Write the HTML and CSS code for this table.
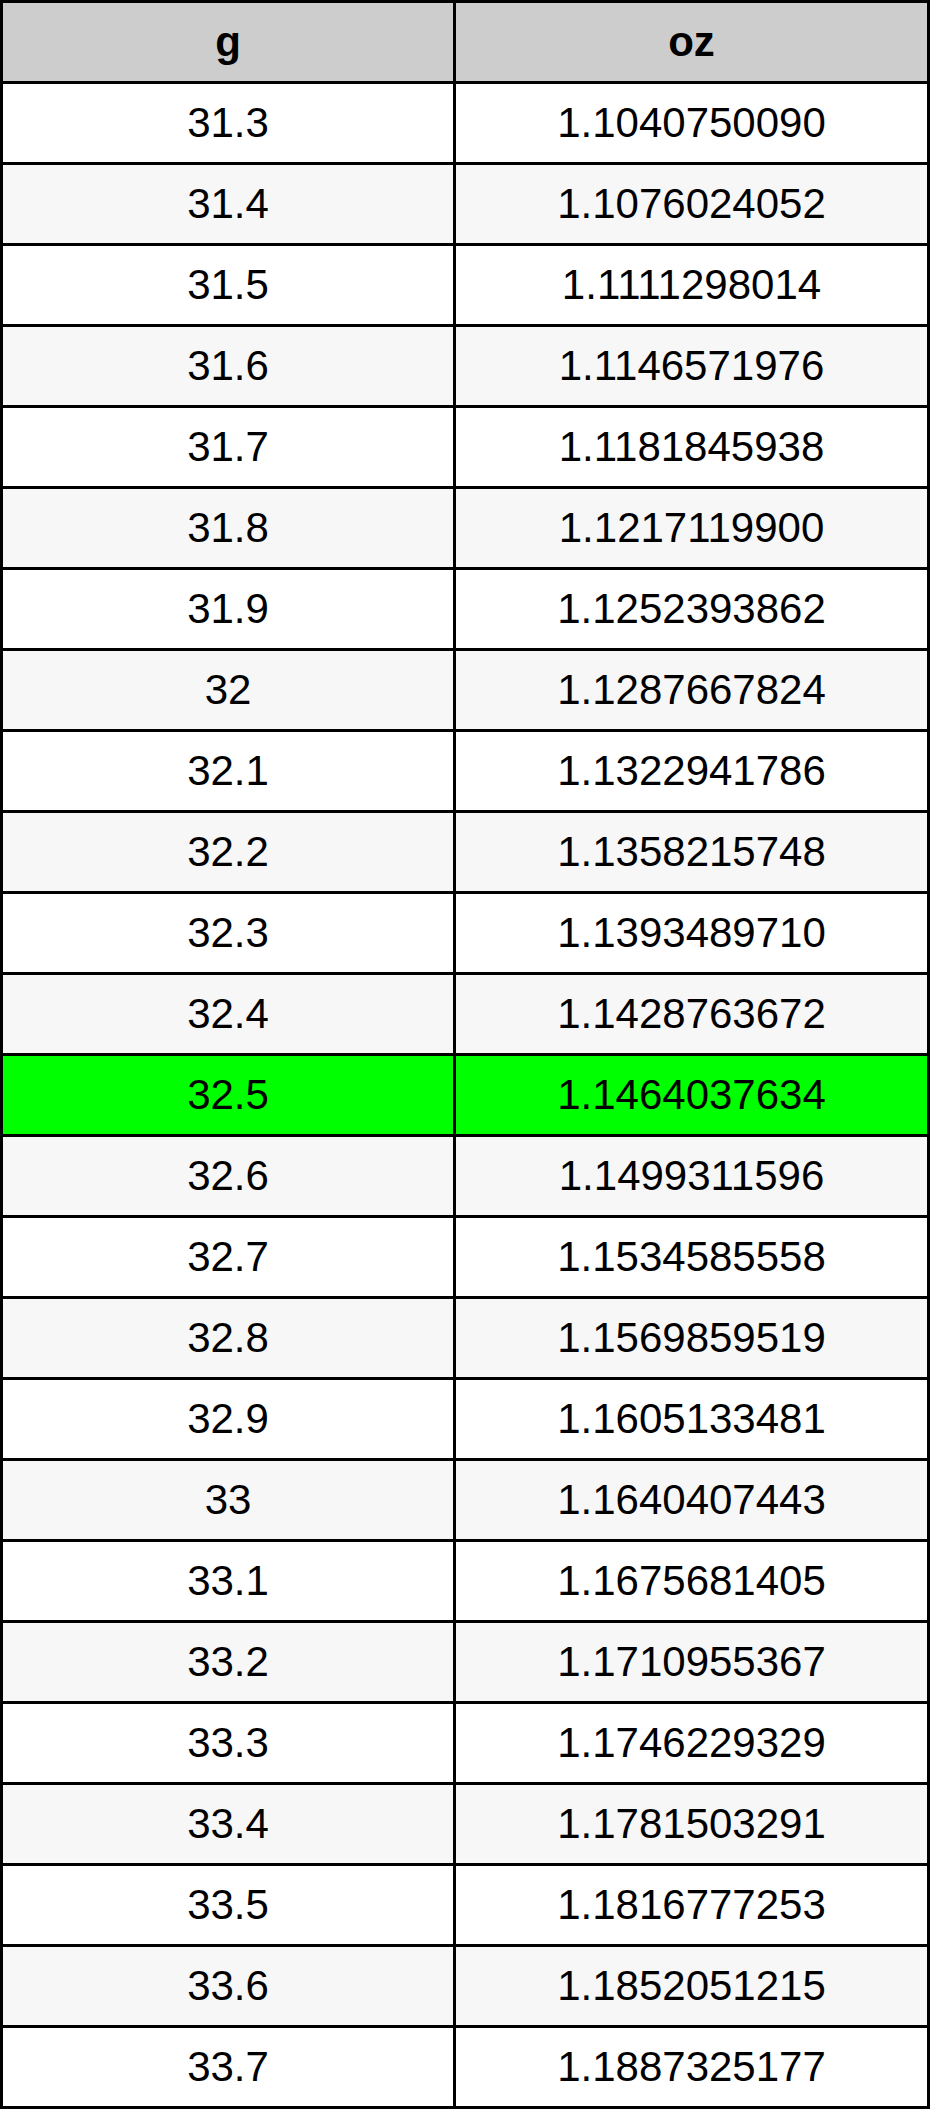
FILE: index.html
```html
<!DOCTYPE html>
<html>
<head>
<meta charset="utf-8">
<title>g to oz</title>
<link rel="stylesheet" href="styles.css">
</head>
<body>
<table class="conv">
<thead>
<tr><th class="col-g">g</th><th>oz</th></tr>
</thead>
<tbody>
<tr><td>31.3</td><td>1.1040750090</td></tr>
<tr class="alt"><td>31.4</td><td>1.1076024052</td></tr>
<tr><td>31.5</td><td>1.1111298014</td></tr>
<tr class="alt"><td>31.6</td><td>1.1146571976</td></tr>
<tr><td>31.7</td><td>1.1181845938</td></tr>
<tr class="alt"><td>31.8</td><td>1.1217119900</td></tr>
<tr><td>31.9</td><td>1.1252393862</td></tr>
<tr class="alt"><td>32</td><td>1.1287667824</td></tr>
<tr><td>32.1</td><td>1.1322941786</td></tr>
<tr class="alt"><td>32.2</td><td>1.1358215748</td></tr>
<tr><td>32.3</td><td>1.1393489710</td></tr>
<tr class="alt"><td>32.4</td><td>1.1428763672</td></tr>
<tr class="hit"><td>32.5</td><td>1.1464037634</td></tr>
<tr class="alt"><td>32.6</td><td>1.1499311596</td></tr>
<tr><td>32.7</td><td>1.1534585558</td></tr>
<tr class="alt"><td>32.8</td><td>1.1569859519</td></tr>
<tr><td>32.9</td><td>1.1605133481</td></tr>
<tr class="alt"><td>33</td><td>1.1640407443</td></tr>
<tr><td>33.1</td><td>1.1675681405</td></tr>
<tr class="alt"><td>33.2</td><td>1.1710955367</td></tr>
<tr><td>33.3</td><td>1.1746229329</td></tr>
<tr class="alt"><td>33.4</td><td>1.1781503291</td></tr>
<tr><td>33.5</td><td>1.1816777253</td></tr>
<tr class="alt"><td>33.6</td><td>1.1852051215</td></tr>
<tr><td>33.7</td><td>1.1887325177</td></tr>
</tbody>
</table>
</body>
</html>
```
FILE: styles.css
```css
html, body {
  margin: 0;
  padding: 0;
  background: #ffffff;
}
.conv {
  width: 930px;
  table-layout: fixed;
  border-collapse: separate;
  border-spacing: 0;
  border-top: 3px solid #000;
  border-left: 3px solid #000;
  font-family: "Liberation Sans", Arial, sans-serif;
  font-size: 42px;
  color: #000;
}
.conv tr {
  height: 81px;
}
.conv th,
.conv td {
  box-sizing: border-box;
  padding: 0;
  border-right: 3px solid #000;
  border-bottom: 3px solid #000;
  text-align: center;
  vertical-align: middle;
  background: #ffffff;
}
.conv th {
  background: #cdcdcd;
  font-weight: bold;
}
.conv .col-g {
  width: 453px;
}
.conv tr.alt td {
  background: #f7f7f7;
}
.conv tr.hit td {
  background: #00ff00;
}
```
